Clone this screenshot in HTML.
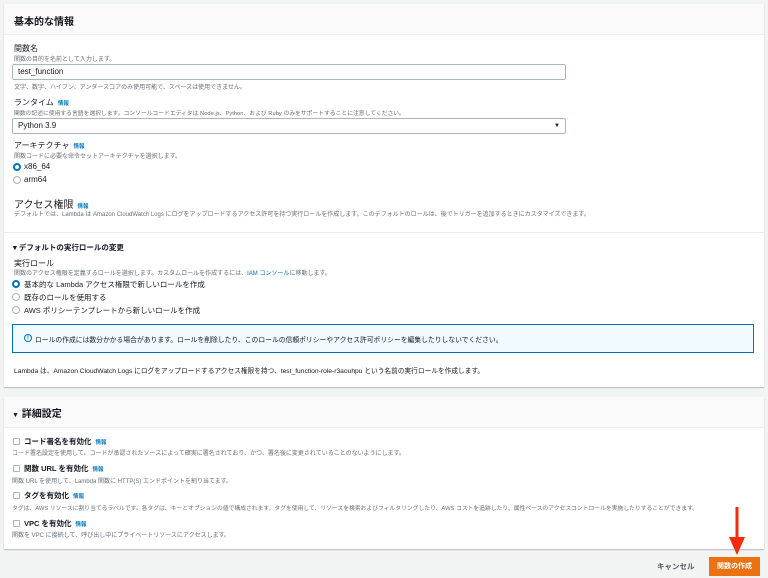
<!DOCTYPE html>
<html><head><meta charset="utf-8"><style>
*{margin:0;padding:0;box-sizing:border-box}
body{width:768px;height:578px;background:#f2f3f3;font-family:"Liberation Sans","Noto Sans CJK JP",sans-serif;color:#16191f;position:relative;overflow:hidden}
.a{position:absolute;white-space:nowrap}
.panel{position:absolute;left:4px;width:760px;background:#fff;box-shadow:0 1px 1px rgba(0,0,0,.25)}
.hd{position:absolute;left:0;top:0;width:100%;background:#fafafa;border-bottom:1px solid #eaeded}
.l{font-size:8px}
.d{font-size:6px;color:#687078}
.i{color:#0073bb;font-size:5.5px;font-weight:bold;margin-left:4px}
.b{font-weight:bold}
.box{position:absolute;border:1px solid #aab7b8;border-radius:2px;background:#fff;font-size:8px;padding-left:5px;line-height:14px}
.r{position:absolute;width:8px;height:8px;border-radius:50%;border:1px solid #aab7b8;background:#fff}
.r.on{border:2.5px solid #0073bb}
.c{position:absolute;width:7px;height:7px;border:1px solid #aab7b8;border-radius:1px;background:#fff}
</style></head><body>
<div class="panel" style="top:4px;height:383px">
 <div class="hd" style="height:31px"></div>
 <div style="position:absolute;left:0;top:228px;width:100%;border-top:1px solid #eaeded"></div>
</div>
<div class="a b" style="left:14px;top:13px;font-size:10px">基本的な情報</div>
<div class="a l" style="left:14px;top:43px">関数名</div>
<div class="a d" style="left:14px;top:54px">関数の目的を名前として入力します。</div>
<div class="box" style="left:12px;top:64px;width:554px;height:16px">test_function</div>
<div class="a d" style="left:14px;top:82px">文字、数字、ハイフン、アンダースコアのみ使用可能で、スペースは使用できません。</div>
<div class="a l" style="left:14px;top:97px">ランタイム<span class="i">情報</span></div>
<div class="a d" style="left:14px;top:108px;font-size:5.8px">関数の記述に使用する言語を選択します。コンソールコードエディタは Node.js、Python、および Ruby のみをサポートすることに注意してください。</div>
<div class="box" style="left:12px;top:118px;width:554px;height:16px">Python 3.9<span style="position:absolute;right:5px;top:0;font-size:6px">▼</span></div>
<div class="a l" style="left:14px;top:140px">アーキテクチャ<span class="i">情報</span></div>
<div class="a d" style="left:14px;top:151px">関数コードに必要な命令セットアーキテクチャを選択します。</div>
<div class="r on" style="left:13px;top:163px"></div><div class="a l" style="left:24px;top:162px">x86_64</div>
<div class="r" style="left:13px;top:176px"></div><div class="a l" style="left:24px;top:175px">arm64</div>
<div class="a" style="left:14px;top:196px;font-size:10px">アクセス権限<span class="i">情報</span></div>
<div class="a d" style="left:14px;top:209px">デフォルトでは、Lambda は Amazon CloudWatch Logs にログをアップロードするアクセス許可を持つ実行ロールを作成します。このデフォルトのロールは、後でトリガーを追加するときにカスタマイズできます。</div>
<div class="a l b" style="left:13px;top:242px;font-size:7.5px">▾ デフォルトの実行ロールの変更</div>
<div class="a l" style="left:14px;top:258px">実行ロール</div>
<div class="a d" style="left:14px;top:268px">関数のアクセス権限を定義するロールを選択します。カスタムロールを作成するには、<span style="color:#0073bb">IAM コンソール</span>に移動します。</div>
<div class="r on" style="left:12px;top:280px"></div><div class="a l" style="left:24px;top:279px;font-size:7.5px">基本的な Lambda アクセス権限で新しいロールを作成</div>
<div class="r" style="left:12px;top:293px"></div><div class="a l" style="left:24px;top:292px;font-size:7.5px">既存のロールを使用する</div>
<div class="r" style="left:12px;top:306px"></div><div class="a l" style="left:24px;top:305px;font-size:7.5px">AWS ポリシーテンプレートから新しいロールを作成</div>
<div style="position:absolute;left:12px;top:324px;width:742px;height:29px;background:#f1faff;border:1px solid #0073bb"></div>
<div class="a" style="left:24px;top:334px;width:8px;height:8px;border:1px solid #0073bb;border-radius:50%;font-size:5px;color:#0073bb;text-align:center;line-height:6px;font-weight:bold">i</div>
<div class="a" style="left:35px;top:334px;font-size:6.8px">ロールの作成には数分かかる場合があります。ロールを削除したり、このロールの信頼ポリシーやアクセス許可ポリシーを編集したりしないでください。</div>
<div class="a" style="left:14px;top:365px;font-size:6.7px">Lambda は、Amazon CloudWatch Logs にログをアップロードするアクセス権限を持つ、test_function-role-r3aouhpu という名前の実行ロールを作成します。</div>

<div class="panel" style="top:397px;height:152px">
 <div class="hd" style="height:31px"></div>
</div>
<div class="a b" style="left:12px;top:405px;font-size:10px"><span style="font-size:7px">▼</span> 詳細設定</div>
<div class="c" style="left:13px;top:438px"></div><div class="a l b" style="left:24px;top:436px;font-size:7.5px">コード署名を有効化<span class="i">情報</span></div>
<div class="a d" style="left:12px;top:448px">コード署名設定を使用して、コードが承認されたソースによって確実に署名されており、かつ、署名後に変更されていることのないようにします。</div>
<div class="c" style="left:13px;top:465px"></div><div class="a l b" style="left:24px;top:463px;font-size:7.5px">関数 URL を有効化<span class="i">情報</span></div>
<div class="a d" style="left:12px;top:476px">関数 URL を使用して、Lambda 関数に HTTP(S) エンドポイントを割り当てます。</div>
<div class="c" style="left:13px;top:492px"></div><div class="a l b" style="left:24px;top:490px;font-size:7.5px">タグを有効化<span class="i">情報</span></div>
<div class="a d" style="left:12px;top:503px;font-size:5.8px">タグは、AWS リソースに割り当てるラベルです。各タグは、キーとオプションの値で構成されます。タグを使用して、リソースを検索およびフィルタリングしたり、AWS コストを追跡したり、属性ベースのアクセスコントロールを実施したりすることができます。</div>
<div class="c" style="left:13px;top:520px"></div><div class="a l b" style="left:24px;top:518px;font-size:7.5px">VPC を有効化<span class="i">情報</span></div>
<div class="a d" style="left:12px;top:530px">関数を VPC に接続して、呼び出し中にプライベートリソースにアクセスします。</div>

<div class="a b" style="left:657px;top:561px;font-size:7.5px;color:#545b64">キャンセル</div>
<div class="a b" style="left:709px;top:557px;width:51px;height:19px;background:#ec7211;color:#fff;font-size:7px;text-align:center;line-height:19px">関数の作成</div>
<svg class="a" style="left:726px;top:505px" width="22" height="52"><line x1="11" y1="2" x2="11" y2="36" stroke="#f22c0c" stroke-width="3"/><polygon points="3,32 19,32 11,50" fill="#f22c0c"/></svg>
</body></html>
